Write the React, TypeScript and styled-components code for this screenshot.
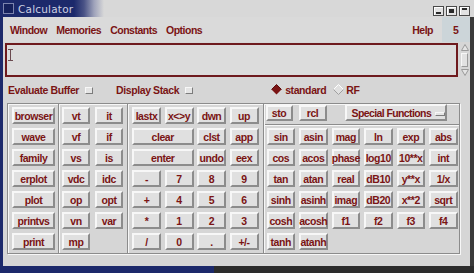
import React from "react";
import styled, { createGlobalStyle } from "styled-components";

const RED = "#7a1414";
const BG = "#d6d6d6";
const FACE = "#e0e0e0";
const HI = "#f7f7f7";
const SH = "#8c8c8c";
const NAVY = "#1c296b";
const FONT = `"Liberation Sans", Arial, sans-serif`;

const Global = createGlobalStyle`
  html, body { margin: 0; padding: 0; background: ${BG}; }
  body { font-family: ${FONT}; }
  * { box-sizing: border-box; }
`;

const Win = styled.div`
  width: 474px;
  height: 273px;
  display: flex;
  flex-direction: column;
  background: ${BG};
  overflow: hidden;
`;

const TitleBar = styled.div`
  height: 17px;
  flex: none;
  display: flex;
  align-items: center;
  padding: 0 4px 0 3px;
  background: linear-gradient(
    90deg,
    ${NAVY} 0,
    ${NAVY} 74px,
    #4a5386 84px,
    #9ea2ba 94px,
    #d8d8d8 104px
  );
`;

const TitleIcon = styled.span`
  width: 11px;
  height: 11px;
  border: 1px solid #7c84ae;
  background: #16215c;
  flex: none;
`;

const TitleText = styled.span`
  margin-left: 4px;
  color: #cdd0e2;
  letter-spacing: 0.2px;
  font-family: "DejaVu Sans", "Liberation Sans", sans-serif;
  font-size: 10.5px;
`;

const Spacer = styled.span`
  flex: 1;
`;

const WmButton = styled.span<{ $kind: "min" | "max" | "shade" }>`
  width: 11px;
  height: 10px;
  margin-left: 2px;
  margin-top: 4px;
  background: #e2e2e2;
  border: 1px solid #4a4a4a;
  box-shadow: inset 1px 1px 0 #ffffff;
  position: relative;
  &::after {
    content: "";
    position: absolute;
    background: #2a2a2a;
    ${(p) =>
      p.$kind === "min"
        ? "left: 2px; right: 2px; bottom: 1px; height: 2px;"
        : p.$kind === "max"
        ? "left: 2px; right: 2px; top: 2px; bottom: 2px;"
        : "left: 2px; right: 2px; top: 1px; height: 2px;"}
  }
`;

const Body = styled.div`
  flex: 1;
  display: flex;
  flex-direction: column;
  border-left: 3px solid ${NAVY};
  border-right: 4px solid #3a3a3a;
  background: ${BG};
`;

const BottomEdge = styled.div`
  height: 7px;
  flex: none;
  background: linear-gradient(90deg, ${NAVY} 0, ${NAVY} 214px, #2c2c2c 214px);
`;

const MenuBar = styled.div`
  height: 25px;
  flex: none;
  display: flex;
  align-items: center;
  padding-left: 7px;
  background: #dadada;
`;

const MenuItem = styled.span`
  font-weight: bold;
  font-size: 10.5px;
  letter-spacing: -0.5px;
  color: ${RED};
  margin-right: 9px;
`;

const HelpItem = styled(MenuItem)`
  margin-right: 9px;
`;

const HelpBox = styled.span`
  align-self: stretch;
  width: 28px;
  background: #ccd5d9;
  display: flex;
  align-items: center;
  justify-content: center;
  font-weight: bold;
  font-size: 10.5px;
  color: ${RED};
`;

const EditRow = styled.div`
  height: 34px;
  margin-top: 1px;
  display: flex;
  flex: none;
`;

const TextArea = styled.div`
  margin-left: 2px;
  width: 453px;
  border: 2px solid #6e1a1e;
  background: #dcdcdc;
  padding: 4px 0 0 1px;
`;

const IBeam = styled.span`
  display: block;
  width: 5px;
  height: 12px;
  border-top: 1px solid #6b4b50;
  border-bottom: 1px solid #6b4b50;
  position: relative;
  &::after {
    content: "";
    position: absolute;
    left: 2px;
    top: 0;
    bottom: 0;
    width: 1px;
    background: #6b4b50;
  }
`;

const ScrollBar = styled.div`
  margin-left: 2px;
  width: 9px;
  display: flex;
  flex-direction: column;
  align-items: center;
  padding: 1px 0;
`;

const Slider = styled.span`
  margin: 2px 0;
  width: 7px;
  flex: 1;
  border: 1px solid;
  border-color: ${HI} #9a9a9a #9a9a9a ${HI};
  background: #e2e2e2;
`;

const OptionsRow = styled.div`
  height: 25px;
  flex: none;
  display: flex;
  align-items: center;
  padding-left: 5px;
`;

const OptLabel = styled.span<{ $gap?: number }>`
  font-weight: bold;
  font-size: 10.5px;
  letter-spacing: -0.4px;
  color: ${RED};
  margin-left: ${(p) => p.$gap ?? 0}px;
`;

const CheckBox = styled.span`
  width: 8px;
  height: 7px;
  margin-left: 6px;
  margin-top: 2px;
  background: #e4e4e4;
  border: 1px solid;
  border-color: ${HI} #7c7c7c #7c7c7c ${HI};
`;

const RadioGroup = styled.span`
  display: flex;
  align-items: center;
  margin-left: 78px;
`;

const Diamond = styled.svg<{ $ml?: number }>`
  width: 11px;
  height: 11px;
  flex: none;
  margin-left: ${(p) => p.$ml ?? 0}px;
`;

const Panel = styled.div`
  margin: 1px 10px 0 4px;
  height: 151px;
  flex: none;
  display: flex;
  border: 1px solid ${SH};
  box-shadow: inset 1px 1px 0 ${HI}, 1px 1px 0 ${HI};
`;

const Sep = styled.span`
  width: 2px;
  flex: none;
  border-left: 1px solid ${SH};
  border-right: 1px solid ${HI};
`;

const Section = styled.div<{ $pl: number; $pr: number }>`
  padding: 3px ${(p) => p.$pr}px 0 ${(p) => p.$pl}px;
  flex: none;
`;

const BtnGrid = styled.div<{ $cols: string; $gap: number }>`
  display: grid;
  grid-template-columns: ${(p) => p.$cols};
  column-gap: ${(p) => p.$gap}px;
  row-gap: 4px;
  grid-auto-rows: 17px;
`;

const Btn = styled.button<{ $span?: number }>`
  grid-column: span ${(p) => p.$span ?? 1};
  margin: 0;
  padding: 0;
  height: 17px;
  min-width: 0;
  display: flex;
  align-items: center;
  justify-content: center;
  white-space: nowrap;
  font-family: ${FONT};
  font-weight: bold;
  font-size: 10.5px;
  letter-spacing: -0.45px;
  color: ${RED};
  background: ${FACE};
  border: 2px solid;
  border-color: ${HI} ${SH} ${SH} ${HI};
  overflow: visible;
`;

const FuncSection = styled.div`
  flex: 1;
  display: flex;
  flex-direction: column;
`;

const TopRow = styled.div`
  display: flex;
  align-items: center;
  height: 17px;
  padding-left: 1px;
`;

const SmallBtn = styled(Btn)<{ $w: number; $ml?: number }>`
  width: ${(p) => p.$w}px;
  height: 16px;
  margin-left: ${(p) => p.$ml ?? 0}px;
`;

const OptionMenu = styled(Btn)`
  width: 102px;
  margin-left: 18px;
  justify-content: flex-start;
  padding-left: 5px;
  gap: 4px;
  letter-spacing: -0.6px;
`;

const Indicator = styled.span`
  width: 10px;
  height: 4px;
  flex: none;
  border: 1px solid;
  border-color: ${HI} #7c7c7c #7c7c7c ${HI};
  background: #e4e4e4;
  margin-top: 2px;
`;

const FuncBox = styled.div`
  margin-top: 3px;
  border-top: 1px solid ${SH};
  box-shadow: inset 0 1px 0 ${HI};
  padding: 3px 0 0 2px;
`;

const colA = ["browser", "wave", "family", "erplot", "plot", "printvs", "print"];
const colB = ["vt", "it", "vf", "if", "vs", "is", "vdc", "idc", "op", "opt", "vn", "var", "mp"];
const colC: [string, number][] = [
  ["lastx", 1], ["x<>y", 1], ["dwn", 1], ["up", 1],
  ["clear", 2], ["clst", 1], ["app", 1],
  ["enter", 2], ["undo", 1], ["eex", 1],
  ["-", 1], ["7", 1], ["8", 1], ["9", 1],
  ["+", 1], ["4", 1], ["5", 1], ["6", 1],
  ["*", 1], ["1", 1], ["2", 1], ["3", 1],
  ["/", 1], ["0", 1], [".", 1], ["+/-", 1],
];
const funcs = [
  "sin", "asin", "mag", "ln", "exp", "abs",
  "cos", "acos", "phase", "log10", "10**x", "int",
  "tan", "atan", "real", "dB10", "y**x", "1/x",
  "sinh", "asinh", "imag", "dB20", "x**2", "sqrt",
  "cosh", "acosh", "f1", "f2", "f3", "f4",
  "tanh", "atanh",
];

export default function App() {
  return (
    <>
      <Global />
      <Win>
        <TitleBar>
          <TitleIcon />
          <TitleText>Calculator</TitleText>
          <Spacer />
          <WmButton $kind="min" />
          <WmButton $kind="max" />
          <WmButton $kind="shade" />
        </TitleBar>
        <Body>
          <MenuBar>
            <MenuItem>Window</MenuItem>
            <MenuItem>Memories</MenuItem>
            <MenuItem>Constants</MenuItem>
            <MenuItem>Options</MenuItem>
            <Spacer />
            <HelpItem>Help</HelpItem>
            <HelpBox>5</HelpBox>
          </MenuBar>
          <EditRow>
            <TextArea>
              <IBeam />
            </TextArea>
            <ScrollBar>
              <svg width="8" height="7" viewBox="0 0 8 7">
                <polygon points="4,0.5 7.5,6.5 0.5,6.5" fill="#e4e4e4" stroke="#9a9a9a" strokeWidth="1" />
              </svg>
              <Slider />
              <svg width="8" height="7" viewBox="0 0 8 7">
                <polygon points="0.5,0.5 7.5,0.5 4,6.5" fill="#e4e4e4" stroke="#9a9a9a" strokeWidth="1" />
              </svg>
            </ScrollBar>
          </EditRow>
          <OptionsRow>
            <OptLabel>Evaluate Buffer</OptLabel>
            <CheckBox />
            <OptLabel $gap={23}>Display Stack</OptLabel>
            <CheckBox />
            <RadioGroup>
              <Diamond viewBox="0 0 11 11">
                <polygon points="5.5,0.5 10.5,5.5 5.5,10.5 0.5,5.5" fill={RED} />
                <polyline points="0.5,5.5 5.5,0.5 10.5,5.5" fill="none" stroke="#5a0c0c" strokeWidth="1" />
              </Diamond>
              <OptLabel $gap={3}>standard</OptLabel>
              <Diamond viewBox="0 0 11 11" $ml={7}>
                <polygon points="5.5,0.5 10.5,5.5 5.5,10.5 0.5,5.5" fill="#e0e0e0" />
                <polyline points="0.5,5.5 5.5,0.5 10.5,5.5" fill="none" stroke="#ffffff" strokeWidth="1" />
                <polyline points="0.5,5.5 5.5,10.5 10.5,5.5" fill="none" stroke="#a0a0a0" strokeWidth="1" />
              </Diamond>
              <OptLabel $gap={2}>RF</OptLabel>
            </RadioGroup>
          </OptionsRow>
          <Panel>
            <Section $pl={4} $pr={3}>
              <BtnGrid $cols="43px" $gap={0}>
                {colA.map((t) => (
                  <Btn key={t}>{t}</Btn>
                ))}
              </BtnGrid>
            </Section>
            <Sep />
            <Section $pl={2} $pr={4}>
              <BtnGrid $cols="28px 28px" $gap={5}>
                {colB.map((t) => (
                  <Btn key={t}>{t}</Btn>
                ))}
              </BtnGrid>
            </Section>
            <Sep />
            <Section $pl={3} $pr={4}>
              <BtnGrid $cols="repeat(4, 29px)" $gap={3.5}>
                {colC.map(([t, s]) => (
                  <Btn key={t} $span={s}>
                    {t}
                  </Btn>
                ))}
              </BtnGrid>
            </Section>
            <Sep />
            <FuncSection>
              <TopRow>
                <SmallBtn $w={27}>sto</SmallBtn>
                <SmallBtn $w={28} $ml={6}>
                  rcl
                </SmallBtn>
                <OptionMenu>
                  Special Functions
                  <Indicator />
                </OptionMenu>
              </TopRow>
              <FuncBox>
                <BtnGrid $cols="repeat(6, 28.5px)" $gap={4}>
                  {funcs.map((t) => (
                    <Btn key={t}>{t}</Btn>
                  ))}
                </BtnGrid>
              </FuncBox>
            </FuncSection>
          </Panel>
          <Spacer />
        </Body>
        <BottomEdge />
      </Win>
    </>
  );
}
